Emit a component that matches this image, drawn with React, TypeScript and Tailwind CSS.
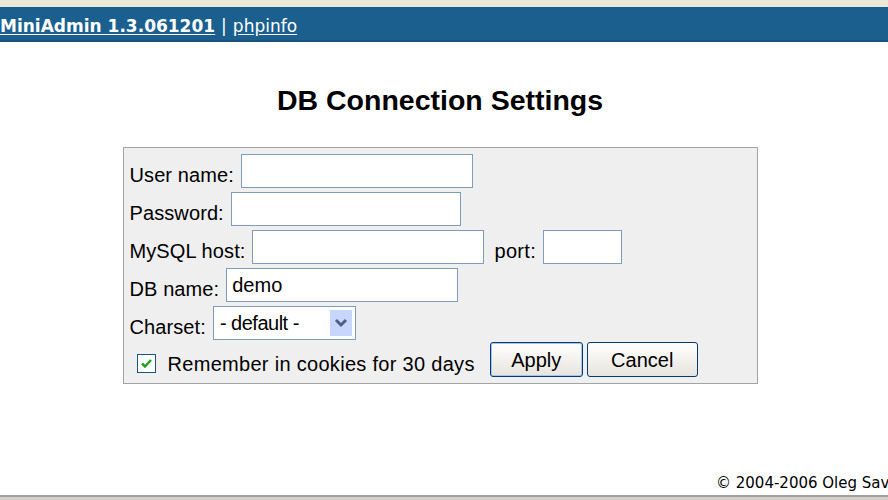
import React from "react";

const labelFont = { fontFamily: '"Liberation Sans", Arial, sans-serif' };

// XP-style text box
function TextBox({ width, value }: { width: string; value?: string }) {
  return (
    <div
      className={`${width} h-[34px] border border-[#7f9db9] bg-white px-[5px] flex items-center text-[20px] text-black`}
    >
      {value}
    </div>
  );
}

function Row({ label, children }: { label: string; children: React.ReactNode }) {
  return (
    <div className="flex items-center gap-[7px] h-[34px]">
      <span className="pt-[8px] text-[20px] tracking-[0.1px] text-black">{label}</span>
      {children}
    </div>
  );
}

function ChevronDown() {
  return (
    <svg width="14" height="10" viewBox="0 0 14 10">
      <path d="M2 2 L7 7 L12 2" fill="none" stroke="#4d6185" strokeWidth="3" />
    </svg>
  );
}

export default function App() {
  return (
    <div className="w-[888px] h-[500px] overflow-hidden bg-white flex flex-col" style={labelFont}>
      {/* browser chrome strip */}
      <div className="h-[7px] bg-[#ece9d8]" />

      {/* header bar */}
      <div
        className="h-[35px] bg-[#1a5f8e] flex items-center text-white whitespace-nowrap border-b-2 border-[#15537c] pt-[6px]"
        style={{ fontFamily: '"DejaVu Sans", Verdana, sans-serif' }}
      >
        <a className="font-bold text-[17px] underline underline-offset-2">MiniAdmin 1.3.061201</a>
        <span className="text-[17px] mx-[6px]">|</span>
        <a className="text-[17px] underline underline-offset-2">phpinfo</a>
      </div>

      <div className="flex-1 flex flex-col items-center pr-[8px]">
        <h1 className="mt-[42px] text-[28.5px] leading-[32px] font-bold text-black">DB Connection Settings</h1>

        <div className="mt-[31px] w-[635px] h-[237px] border border-[#a3a3a3] bg-[#efefef] pl-[6px] pt-[6px] flex flex-col gap-[4px]">
          <Row label="User name:">
            <TextBox width="w-[232px]" />
          </Row>
          <Row label="Password:">
            <TextBox width="w-[230px]" />
          </Row>
          <Row label="MySQL host:">
            <TextBox width="w-[232px]" />
            <span className="ml-[3px] pt-[8px] text-[20px] tracking-[0.3px] text-black">port:</span>
            <TextBox width="w-[79px]" />
          </Row>
          <Row label="DB name:">
            <TextBox width="w-[232px]" value="demo" />
          </Row>
          <Row label="Charset:">
            <div className="w-[143px] h-[34px] border border-[#7f9db9] bg-white flex items-center justify-between pl-[6px] pr-[3px] text-[20px] text-black">
              <span className="tracking-tight">- default -</span>
              <div className="w-[22px] h-[26px] bg-[#c6d6fc] flex items-center justify-center">
                <ChevronDown />
              </div>
            </div>
          </Row>

          <div className="flex items-center h-[35px] mt-[-2px]">
            <div className="ml-[7px] w-[19px] h-[19px] border border-[#1c5180] bg-white flex items-center justify-center mt-[8px]">
              <svg width="13" height="13" viewBox="0 0 13 13">
                <path d="M2 6.5 L5 9.5 L11 3" fill="none" stroke="#21a121" strokeWidth="2.5" />
              </svg>
            </div>
            <span className="ml-[12px] pt-[8px] text-[20px] tracking-[0.3px] text-black">
              Remember in cookies for 30 days
            </span>
            <button className="ml-[15px] w-[93px] h-[35px] rounded-[3px] border border-[#003c74] bg-gradient-to-b from-white to-[#e6e4dc] text-[20px] text-black shadow-[inset_0_0_0_1px_#a8c4ec]">
              Apply
            </button>
            <button className="ml-[4px] w-[111px] h-[35px] rounded-[3px] border border-[#003c74] bg-gradient-to-b from-white to-[#e6e4dc] text-[20px] text-black">
              Cancel
            </button>
          </div>
        </div>
      </div>

      {/* footer */}
      <div
        className="h-[24px] pl-[716px] whitespace-nowrap text-[15px] text-black leading-[24px]"
        style={{ fontFamily: '"DejaVu Sans", Verdana, sans-serif' }}
      >
        © 2004-2006 Oleg Savchuk
      </div>
      <div className="h-[2px] bg-[#a0a0a0]" />
      <div className="h-[3px] bg-[#d4d0c8]" />
    </div>
  );
}
